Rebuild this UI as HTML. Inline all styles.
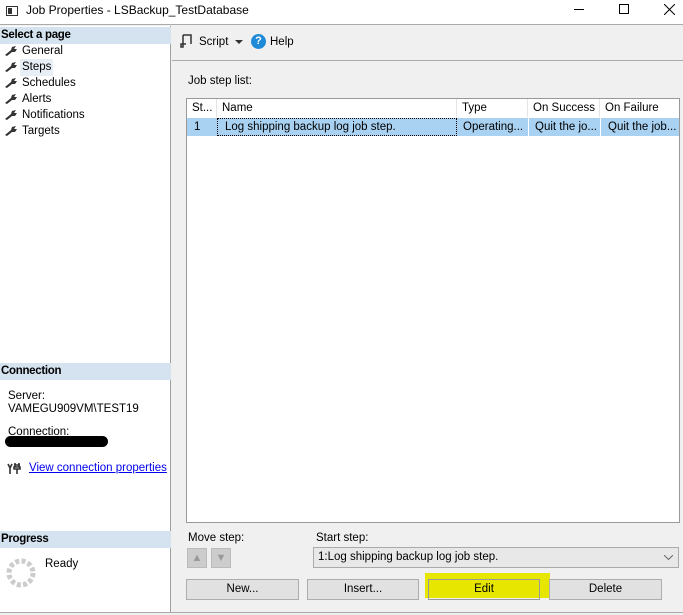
<!DOCTYPE html>
<html><head><style>
*{margin:0;padding:0;box-sizing:border-box}
body{width:683px;height:615px;background:#f0f0f0;font-family:"Liberation Sans",sans-serif;font-size:11.5px;line-height:17px;color:#000;position:relative;overflow:hidden}
.a{position:absolute}
.hdr{position:absolute;left:0;width:171px;height:17px;background:#d5e2ef;font-weight:bold;padding:0 0 0 1px;font-size:11.5px;letter-spacing:-0.3px}
.nav{position:absolute;left:5px;height:16px}
.nav span{position:absolute;left:17px;top:0}
.w{position:absolute;left:0;top:3px;width:12px;height:10px}
.btn{position:absolute;top:579px;height:21px;background:#e1e1e1;border:1px solid #adadad;text-align:center;line-height:19px}
.col{position:absolute;top:99px;height:18px;border-right:1px solid #e5e5e5;padding:1px 0 0 5px;white-space:nowrap;overflow:hidden}
.cell{position:absolute;top:118px;height:18px;padding:1px 0 0 5px;white-space:nowrap}
</style></head><body>
<div class="a" style="left:0;top:0;width:683px;height:25px;background:#fff;border-bottom:1px solid #aaa"></div>
<div class="a" style="left:6px;top:6px;width:12px;height:10px;border:1px solid #333"><div class="a" style="left:1px;top:1px;width:4px;height:6px;background:#333"></div></div>
<div class="a" style="left:26px;top:2px;font-size:12px">Job Properties - LSBackup_TestDatabase</div>
<div class="a" style="left:574px;top:9px;width:10px;height:1px;background:#000"></div>
<div class="a" style="left:619px;top:4px;width:10px;height:10px;border:1px solid #000"></div>
<svg class="a" style="left:664px;top:4px" width="11" height="11" viewBox="0 0 11 11"><path d="M0 0 L11 11 M11 0 L0 11" stroke="#000" stroke-width="1"/></svg>
<div class="a" style="left:0;top:26px;width:171px;height:586px;background:#fff;border-right:1px solid #a0a0a0"></div>
<div class="hdr" style="top:27px">Select a page</div>
<div class="nav" style="top:43px"><svg class="w" viewBox="0 0 12 10"><path d="M0 9 L6 4 L7 1 L11 0 L9 3 L12 3 L10 6 L7 6 L2 10 Z" fill="#333"/></svg><span>General</span></div>
<div class="nav" style="top:59px"><svg class="w" viewBox="0 0 12 10"><path d="M0 9 L6 4 L7 1 L11 0 L9 3 L12 3 L10 6 L7 6 L2 10 Z" fill="#333"/></svg><span style="background:#e8eef5;left:15px;padding:0 2px">Steps</span></div>
<div class="nav" style="top:75px"><svg class="w" viewBox="0 0 12 10"><path d="M0 9 L6 4 L7 1 L11 0 L9 3 L12 3 L10 6 L7 6 L2 10 Z" fill="#333"/></svg><span>Schedules</span></div>
<div class="nav" style="top:91px"><svg class="w" viewBox="0 0 12 10"><path d="M0 9 L6 4 L7 1 L11 0 L9 3 L12 3 L10 6 L7 6 L2 10 Z" fill="#333"/></svg><span>Alerts</span></div>
<div class="nav" style="top:107px"><svg class="w" viewBox="0 0 12 10"><path d="M0 9 L6 4 L7 1 L11 0 L9 3 L12 3 L10 6 L7 6 L2 10 Z" fill="#333"/></svg><span>Notifications</span></div>
<div class="nav" style="top:123px"><svg class="w" viewBox="0 0 12 10"><path d="M0 9 L6 4 L7 1 L11 0 L9 3 L12 3 L10 6 L7 6 L2 10 Z" fill="#333"/></svg><span>Targets</span></div>
<div class="hdr" style="top:363px">Connection</div>
<div class="a" style="left:8px;top:388px">Server:</div>
<div class="a" style="left:8px;top:401px">VAMEGU909VM\TEST19</div>
<div class="a" style="left:8px;top:424px">Connection:</div>
<div class="a" style="left:5px;top:436px;width:103px;height:11px;background:#000;border-radius:6px"></div>
<svg class="a" style="left:7px;top:463px" width="14" height="12" viewBox="0 0 14 12"><path d="M1 1 L3 5 L5 1 M3 5 V11 M7 2 H13 M8 0 V4 M12 0 V4 M7 4 H13 V6 H7 Z M10 6 V11" stroke="#333" stroke-width="1.6" fill="none"/></svg>
<div class="a" style="left:29px;top:460px;color:#00e;text-decoration:underline">View connection properties</div>
<div class="hdr" style="top:531px">Progress</div>
<svg class="a" style="left:6px;top:558px" width="30" height="30" viewBox="0 0 30 30"><circle cx="15" cy="15" r="12" fill="none" stroke="#ccc" stroke-width="5" stroke-dasharray="4 2.3"/></svg>
<div class="a" style="left:45px;top:556px">Ready</div>
<div class="a" style="left:172px;top:60px;width:511px;height:1px;background:#aaa"></div>
<svg class="a" style="left:180px;top:34px" width="13" height="14" viewBox="0 0 13 14"><path d="M3 1 H11 V10 M3 1 V13 H1 V10 H6" fill="none" stroke="#333" stroke-width="1.5"/></svg>
<div class="a" style="left:199px;top:34px">Script</div>
<div class="a" style="left:235px;top:40px;border:4px solid transparent;border-top:4px solid #333"></div>
<div class="a" style="left:251px;top:34px;width:15px;height:15px;border-radius:50%;background:#1f8ad8;color:#fff;font-weight:bold;font-size:11px;text-align:center;line-height:15px">?</div>
<div class="a" style="left:270px;top:34px">Help</div>
<div class="a" style="left:188px;top:73px">Job step list:</div>
<div class="a" style="left:186px;top:98px;width:494px;height:425px;background:#fff;border:1px solid #999"></div>
<div class="col" style="left:187px;width:30px">St...</div>
<div class="col" style="left:217px;width:240px">Name</div>
<div class="col" style="left:457px;width:71px">Type</div>
<div class="col" style="left:528px;width:72px">On Success</div>
<div class="col" style="left:600px;width:79px;border:0">On Failure</div>
<div class="a" style="left:187px;top:118px;width:492px;height:18px;background:#a9d1f1"></div>
<div class="a" style="left:217px;top:118px;width:240px;height:18px;border:1px dotted #000"></div>
<div class="a" style="left:528px;top:118px;width:1px;height:18px;background:#fff"></div>
<div class="a" style="left:600px;top:118px;width:1px;height:18px;background:#fff"></div>
<div class="cell" style="left:189px">1</div>
<div class="cell" style="left:220px">Log shipping backup log job step.</div>
<div class="cell" style="left:458px">Operating...</div>
<div class="cell" style="left:530px">Quit the jo...</div>
<div class="cell" style="left:603px">Quit the job...</div>
<div class="a" style="left:188px;top:530px">Move step:</div>
<div class="a" style="left:316px;top:530px">Start step:</div>
<div class="a" style="left:187px;top:548px;width:20px;height:20px;background:#ccc;border:1px solid #bbb;color:#999;text-align:center;font-size:11px;line-height:18px">▲</div>
<div class="a" style="left:211px;top:548px;width:20px;height:20px;background:#ccc;border:1px solid #bbb;color:#999;text-align:center;font-size:11px;line-height:18px">▼</div>
<div class="a" style="left:313px;top:547px;width:366px;height:21px;background:#e8e8e8;border:1px solid #aaa;padding:1px 0 0 4px">1:Log shipping backup log job step.</div>
<svg class="a" style="left:664px;top:555px" width="9" height="5" viewBox="0 0 9 5"><path d="M0 0 L4.5 4.5 L9 0" stroke="#666" fill="none"/></svg>
<div class="a" style="left:425px;top:573px;width:125px;height:25px;background:#e6e600"></div>
<div class="btn" style="left:186px;width:113px">New...</div>
<div class="btn" style="left:307px;width:112px">Insert...</div>
<div class="btn" style="left:428px;width:112px;background:transparent;border-color:#999">Edit</div>
<div class="btn" style="left:549px;width:113px">Delete</div>
<div class="a" style="left:0;top:612px;width:683px;height:1px;background:#aaa"></div>
</body></html>
